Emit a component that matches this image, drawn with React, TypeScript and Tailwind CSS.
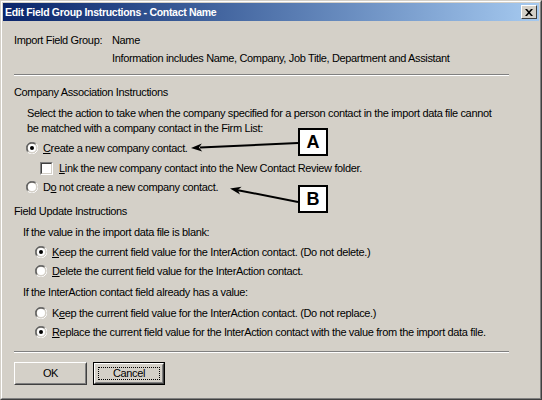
import type { ReactNode } from 'react';

const face = "font-['Liberation_Sans',Arial,sans-serif]";

function Radio({ checked }: { checked?: boolean }) {
  // classic sunken radio, 12x12
  return (
    <svg width="12" height="12" viewBox="0 0 12 12" className="shrink-0">
      <path d="M1.76 10.24 A6 6 0 0 1 10.24 1.76" fill="none" stroke="#808080" strokeWidth="1" />
      <path d="M10.24 1.76 A6 6 0 0 1 1.76 10.24" fill="none" stroke="#ffffff" strokeWidth="1" />
      <path d="M2.46 9.54 A5 5 0 0 1 9.54 2.46" fill="none" stroke="#404040" strokeWidth="1" />
      <path d="M9.54 2.46 A5 5 0 0 1 2.46 9.54" fill="none" stroke="#d4d0c8" strokeWidth="1" />
      <circle cx="6" cy="6" r="4" fill="#ffffff" />
      {checked && <circle cx="6" cy="6" r="2" fill="#000000" />}
    </svg>
  );
}

function Check() {
  return (
    <div className="w-[13px] h-[13px] shrink-0 border border-t-[#808080] border-l-[#808080] border-b-white border-r-white">
      <div className="w-full h-full bg-white border border-t-[#404040] border-l-[#404040] border-b-[#d4d0c8] border-r-[#d4d0c8]" />
    </div>
  );
}

function Option({ checked, children, className }: { checked?: boolean; children: ReactNode; className: string }) {
  return (
    <div className={`flex items-center h-[14px] whitespace-nowrap ${className}`}>
      <Radio checked={checked} />
      <span className="ml-[5px]">{children}</span>
    </div>
  );
}

function Separator({ className }: { className: string }) {
  return (
    <div className={`w-[495px] ${className}`}>
      <div className="h-px bg-[#808080]" />
      <div className="h-px bg-white" />
    </div>
  );
}

export default function App() {
  return (
    <div className={`relative w-[542px] h-[400px] bg-[#d4d0c8] text-black ${face} text-[11px] tracking-[-0.35px] border border-t-[#d4d0c8] border-l-[#d4d0c8] border-b-[#404040] border-r-[#404040]`}>
      <div className="w-full h-full border border-t-white border-l-white border-b-[#808080] border-r-[#808080] p-px">
        {/* Title bar */}
        <div className="h-[18px] flex items-center justify-between bg-gradient-to-r from-[#0a246a] to-[#a6caf0] pl-[2px] pr-[2px]">
          <span className="text-white font-bold text-[10.5px] tracking-[-0.3px] leading-none">
            Edit Field Group Instructions - Contact Name
          </span>
          <div className="w-[16px] h-[14px] bg-[#d4d0c8] border border-t-white border-l-white border-b-[#404040] border-r-[#404040] flex items-center justify-center">
            <svg width="8" height="7" viewBox="0 0 8 7">
              <path d="M0 0h2l2 2.3L6 0h2L5 3.5 8 7H6L4 4.7 2 7H0l3-3.5z" fill="#000" />
            </svg>
          </div>
        </div>

        {/* Body */}
        <div className="pl-[11px]">
          <div className="mt-[12px] flex h-[14px] items-center whitespace-nowrap">
            <span className="w-[98px]">Import Field Group:</span>
            <span>Name</span>
          </div>
          <div className="mt-[4px] h-[14px] pl-[98px] flex items-center whitespace-nowrap">
            Information includes Name, Company, Job Title, Department and Assistant
          </div>

          <Separator className="mt-[9px]" />

          <div className="mt-[9px] h-[14px] flex items-center">Company Association Instructions</div>
          <p className="mt-[7px] ml-[13px] leading-[15px] whitespace-nowrap">
            Select the action to take when the company specified for a person contact in the import data file cannot
            <br />
            be matched with a company contact in the Firm List:
          </p>
          <Option checked className="mt-[5px] ml-[12px]">
            <u>C</u>reate a new company contact.
          </Option>
          <div className="mt-[6px] ml-[26px] flex items-center h-[14px] whitespace-nowrap">
            <Check />
            <span className="ml-[6px]">
              <u>L</u>ink the new company contact into the New Contact Review folder.
            </span>
          </div>
          <Option className="mt-[5px] ml-[12px]">
            D<u>o</u> not create a new company contact.
          </Option>

          <div className="mt-[10px] h-[14px] flex items-center">Field Update Instructions</div>
          <div className="mt-[7px] ml-[9px] h-[14px] flex items-center whitespace-nowrap">
            If the value in the import data file is blank:
          </div>
          <Option checked className="mt-[6px] ml-[21px]">
            <u>K</u>eep the current field value for the InterAction contact. (Do not delete.)
          </Option>
          <Option className="mt-[5px] ml-[21px]">
            <u>D</u>elete the current field value for the InterAction contact.
          </Option>
          <div className="mt-[7px] ml-[9px] h-[14px] flex items-center whitespace-nowrap">
            If the InterAction contact field already has a value:
          </div>
          <Option className="mt-[7px] ml-[21px]">
            K<u>e</u>ep the current field value for the InterAction contact. (Do not replace.)
          </Option>
          <Option checked className="mt-[5px] ml-[21px]">
            <u>R</u>eplace the current field value for the InterAction contact with the value from the import data file.
          </Option>

          <Separator className="mt-[12px]" />

          <div className="mt-[9px] flex gap-[6px]">
            <div className="w-[73px] h-[23px] border border-t-white border-l-white border-b-[#404040] border-r-[#404040]">
              <div className="w-full h-full border border-t-[#d4d0c8] border-l-[#d4d0c8] border-b-[#808080] border-r-[#808080] flex items-center justify-center">
                OK
              </div>
            </div>
            <div className="w-[72px] h-[23px] border border-black">
              <div className="w-full h-full border border-t-white border-l-white border-b-[#404040] border-r-[#404040]">
                <div className="w-full h-full border border-t-[#d4d0c8] border-l-[#d4d0c8] border-b-[#808080] border-r-[#808080] p-[2px]">
                  <div className="w-full h-full border border-dotted border-black flex items-center justify-center">
                    Cancel
                  </div>
                </div>
              </div>
            </div>
          </div>
        </div>
      </div>

      {/* Callout annotations */}
      <svg className="absolute left-[-1px] top-[-1px] pointer-events-none" width="542" height="400" viewBox="0 0 542 400">
        <line x1="298" y1="143" x2="200" y2="147.6" stroke="#000" strokeWidth="2" />
        <polygon points="191,148 202.2,151.5 199,147.6 201.8,143.5" fill="#000" />
        <line x1="298" y1="202" x2="238" y2="190.2" stroke="#000" strokeWidth="2" />
        <polygon points="230,188.5 240,194.5 237.8,190.1 241.6,186.7" fill="#000" />
      </svg>
      <div className="absolute left-[297px] top-[127px] w-[30px] h-[28px] bg-white border-2 border-black flex items-center justify-center font-bold text-[18px] tracking-normal">
        A
      </div>
      <div className="absolute left-[297px] top-[184px] w-[30px] h-[28px] bg-white border-2 border-black flex items-center justify-center font-bold text-[18px] tracking-normal">
        B
      </div>
    </div>
  );
}
